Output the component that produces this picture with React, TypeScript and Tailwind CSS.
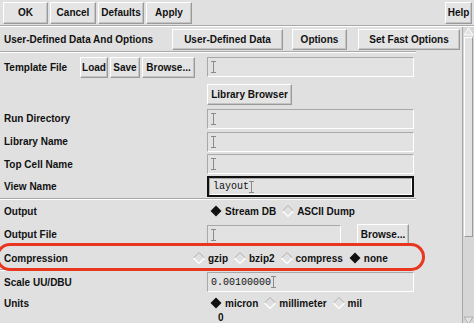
import React from 'react';

const font = { fontFamily: '"Liberation Sans", Arial, sans-serif' };

const Btn: React.FC<{ label: string; className?: string }> = ({ label, className = '' }) => (
  <div
    className={`flex items-center justify-center whitespace-nowrap border border-t-white border-l-white border-b-[#9a9a9a] border-r-[#9a9a9a] bg-[#e4e4e4] text-[10px] font-bold text-[#111] shadow-[inset_-1px_-1px_0_#c4c4c4] ${className}`}
  >
    {label}
  </div>
);

const Beam: React.FC = () => (
  <svg width="5" height="12" viewBox="0 0 5 12" className="shrink-0">
    <path d="M0 0.5h5M0 11.5h5M2.5 0v12" stroke="#8a8a8a" strokeWidth="1" fill="none" />
  </svg>
);

const Field: React.FC<{ className?: string; text?: string; focus?: boolean }> = ({ className = '', text, focus }) => {
  const inner = (
    <div className="flex h-full w-full items-center border border-t-[#a8a8a8] border-l-[#a8a8a8] border-b-white border-r-white bg-[#e2e2e2] pl-[3px]">
      {text && (
        <span className="text-[10px] text-[#111]" style={{ fontFamily: '"Liberation Mono", "Courier New", monospace' }}>
          {text}
        </span>
      )}
      <Beam />
    </div>
  );
  if (focus) return <div className={`border-2 border-[#111] ${className}`}>{inner}</div>;
  return <div className={className}>{inner}</div>;
};

const Diamond: React.FC<{ on?: boolean }> = ({ on }) => (
  <svg width="12" height="12" viewBox="0 0 12 12" className="shrink-0">
    {on ? (
      <polygon points="6,0.5 11.5,6 6,11.5 0.5,6" fill="#111" />
    ) : (
      <>
        <polyline points="0.5,6 6,0.5 11.5,6" fill="none" stroke="#b0b0b0" strokeWidth="1" />
        <polyline points="0.5,6 6,11.5 11.5,6" fill="none" stroke="#ffffff" strokeWidth="1.2" />
      </>
    )}
  </svg>
);

const Radio: React.FC<{ label: string; on?: boolean }> = ({ label, on }) => (
  <div className="flex items-center gap-[3px]">
    <Diamond on={on} />
    <span className="whitespace-nowrap text-[10px] font-bold text-[#111]">{label}</span>
  </div>
);

const Groove: React.FC<{ className?: string }> = ({ className = '' }) => (
  <div className={`h-[2px] border-t border-t-[#a8a8a8] border-b border-b-white ${className}`} />
);

const Row: React.FC<{ label?: string; h: string; children?: React.ReactNode }> = ({ label, h, children }) => (
  <div className={`flex items-center ${h}`}>
    <div className="w-[207px] shrink-0 whitespace-nowrap pl-[4px] text-[10px] font-bold text-[#111]">{label}</div>
    {children}
  </div>
);

export default function App() {
  return (
    <div className="relative h-[323px] w-[474px] overflow-hidden bg-[#e0e0e0]" style={font}>
      {/* top action bar */}
      <div className="flex h-[25px] items-center pl-[3px] pr-[2px]">
        <div className="flex gap-[2px]">
          <Btn label="OK" className="h-[22px] w-[45px]" />
          <Btn label="Cancel" className="h-[22px] w-[46px]" />
          <Btn label="Defaults" className="h-[22px] w-[46px]" />
          <Btn label="Apply" className="h-[22px] w-[46px]" />
        </div>
        <Btn label="Help" className="ml-auto h-[22px] w-[27px]" />
      </div>
      <Groove />

      <div className="flex">
        <div className="w-[462px]">
          <div className="flex h-[24px] items-center">
            <div className="w-[172px] whitespace-nowrap pl-[4px] text-[10px] font-bold text-[#111]">User-Defined Data And Options</div>
            <Btn label="User-Defined Data" className="h-[21px] w-[111px]" />
            <Btn label="Options" className="ml-[9px] h-[21px] w-[55px]" />
            <Btn label="Set Fast Options" className="ml-[11px] h-[21px] w-[102px]" />
          </div>
          <Groove className="w-[416px]" />

          <div className="w-[416px]">
            <div className="flex h-[28px] items-center">
              <div className="w-[80px] whitespace-nowrap pl-[4px] text-[10px] font-bold text-[#111]">Template File</div>
              <div className="flex gap-[2px]">
                <Btn label="Load" className="h-[21px] w-[28px]" />
                <Btn label="Save" className="h-[21px] w-[30px]" />
                <Btn label="Browse..." className="h-[21px] w-[53px]" />
              </div>
              <Field className="ml-[12px] h-[20px] w-[207px]" />
            </div>
            <Row h="h-[26px]">
              <Btn label="Library Browser" className="h-[21px] w-[85px]" />
            </Row>
            <Row label="Run Directory" h="h-[23px]">
              <Field className="h-[20px] w-[207px]" />
            </Row>
            <Row label="Library Name" h="h-[23px]">
              <Field className="h-[20px] w-[207px]" />
            </Row>
            <Row label="Top Cell Name" h="h-[22px]">
              <Field className="h-[20px] w-[207px]" />
            </Row>
            <Row label="View Name" h="h-[23px]">
              <Field className="h-[21px] w-[207px]" text="layout" focus />
            </Row>
            <Groove />
            <Row label="Output" h="h-[22px]">
              <div className="ml-[3px] flex gap-[6px]">
                <Radio label="Stream DB" on />
                <Radio label="ASCII Dump" />
              </div>
            </Row>
            <Row label="Output File" h="h-[25px]">
              <Field className="h-[20px] w-[134px]" />
              <Btn label="Browse..." className="ml-[16px] h-[21px] w-[52px]" />
            </Row>
            <div className="flex h-[22px] items-center">
              <div className="w-[193px] shrink-0 whitespace-nowrap pl-[4px] text-[10px] font-bold text-[#111]">Compression</div>
              <div className="flex gap-[6px]">
                <Radio label="gzip" />
                <Radio label="bzip2" />
                <Radio label="compress" />
                <Radio label="none" on />
              </div>
            </div>
            <Groove />
            <Row label="Scale UU/DBU" h="h-[22px]">
              <Field className="h-[20px] w-[207px]" text="0.00100000" />
            </Row>
            <Row label="Units" h="h-[20px]">
              <div className="ml-[3px] flex gap-[6px]">
                <Radio label="micron" on />
                <Radio label="millimeter" />
                <Radio label="mil" />
              </div>
            </Row>
            <div className="h-[10px] pl-[218px] text-[10px] font-bold leading-[10px] text-[#111]">0</div>
          </div>
        </div>

        {/* scrollbar */}
        <div className="flex h-[298px] w-[12px] flex-col border-l border-l-[#a8a8a8] bg-[#d6d6d6]">
          <svg width="11" height="9" viewBox="0 0 11 9">
            <polygon points="5.5,1 10,8 1,8" fill="#e2e2e2" stroke="#ffffff" strokeWidth="1" />
          </svg>
          <div className="mx-[1px] mt-[1px] h-[200px] border border-t-white border-l-white border-b-[#9a9a9a] border-r-[#9a9a9a] bg-[#e2e2e2]" />
          <div className="mt-auto">
            <svg width="11" height="9" viewBox="0 0 11 9">
              <polygon points="1,1 10,1 5.5,8" fill="#e2e2e2" stroke="#b0b0b0" strokeWidth="1" />
            </svg>
          </div>
        </div>
      </div>

      {/* red annotation */}
      <div className="pointer-events-none absolute left-[-4px] top-[243px] h-[28px] w-[429px] rounded-[14px] border-[3px] border-[#e8361f]" />
    </div>
  );
}
